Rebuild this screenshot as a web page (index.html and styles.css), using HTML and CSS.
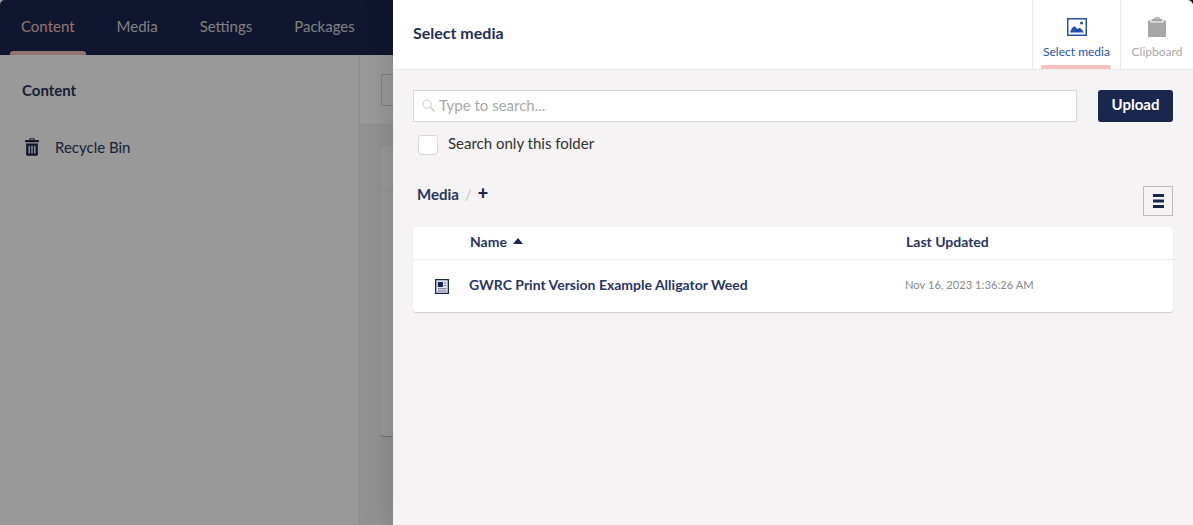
FILE: index.html
```html
<!DOCTYPE html>
<html lang="en">
<head>
<meta charset="utf-8">
<title>Select media</title>
<link rel="stylesheet" href="styles.css">
</head>
<body>
<div class="app">
  <header class="topbar">
    <nav class="sections">
      <a class="section active">Content</a>
      <a class="section">Media</a>
      <a class="section">Settings</a>
      <a class="section">Packages</a>
    </nav>
  </header>
  <div class="main">
    <aside class="tree">
      <h2 class="tree-title">Content</h2>
      <div class="tree-item">
        <svg class="trash" viewBox="0 0 16 20"><path fill="currentColor" d="M5.500 0h5l.7 2H15a1 1 0 0 1 1 1v1.500H0V3a1 1 0 0 1 1-1h3.800zM6.300 1.200 6 2h4l-.3-.8zM1.300 6h13.400v12.500a1.500 1.500 0 0 1-1.500 1.500H2.800a1.500 1.500 0 0 1-1.500-1.500zM4 8.500V17.500h1.600V8.500zM7.200 8.500V17.500h1.600V8.500zM10.400 8.500V17.500H12V8.500z" fill-rule="evenodd"/></svg>
        <span>Recycle Bin</span>
      </div>
    </aside>
    <section class="editor">
      <div class="editor-head"><div class="editor-input"></div></div>
      <div class="editor-body"><div class="editor-card"><div class="editor-card-head"></div></div></div>
    </section>
  </div>
</div>
<div class="overlay"></div>
<div class="modal">
  <header class="modal-head">
    <h1 class="modal-title">Select media</h1>
    <div class="tabs">
      <div class="tab tab-on">
        <svg class="tab-icon" viewBox="0 0 20 18"><path fill="currentColor" fill-rule="evenodd" d="M0 0h20v18H0zM1.500 1.500v15h17v-15z"/><circle fill="currentColor" cx="14.500" cy="5" r="1.500"/><path fill="currentColor" d="M3 14.500c1-2.500 2.500-6 4.500-6 1.200 0 1.800 1.500 2.800 2.700.7-.8 1.400-1.200 2.200-1.200 1.800 0 3 2.500 4.500 4.500z"/></svg>
        <span>Select media</span>
      </div>
      <div class="tab tab-off">
        <svg class="tab-icon clip" viewBox="0 0 18 20"><path fill="currentColor" fill-rule="evenodd" d="M6 2C6 .8 7.300 0 9 0s3 .8 3 2h2.500v2.500h-11V2zM8 2h2c0-.4-.4-.8-1-.8S8 1.600 8 2zM0 3.500h2.500v2h13v-2H18V20H0z"/></svg>
        <span>Clipboard</span>
      </div>
    </div>
  </header>
  <div class="modal-body">
    <div class="search-row">
      <label class="search">
        <svg class="search-icon" viewBox="0 0 14 14"><circle cx="5.500" cy="5.500" r="4.500" fill="none" stroke="currentColor"/><path d="M9 9l4.500 4.500" stroke="currentColor" stroke-width="1.500"/></svg>
        <span>Type to search...</span>
      </label>
      <button class="upload">Upload</button>
    </div>
    <div class="check-row"><span class="checkbox"></span><span class="check-label">Search only this folder</span></div>
    <div class="crumb-row">
      <div class="crumbs"><span class="crumb">Media</span><span class="slash">/</span><span class="plus">+</span></div>
      <button class="view-btn"><svg viewBox="0 0 11 14" class="view-icon"><path fill="currentColor" d="M0 0h11v3H0zM0 5.500h11v3H0zM0 11h11v3H0z"/></svg></button>
    </div>
    <div class="table">
      <div class="thead">
        <div class="c-name">Name <svg class="sort" viewBox="0 0 10 6"><path fill="currentColor" d="M5 0l5 6H0z"/></svg></div>
        <div class="c-date">Last Updated</div>
      </div>
      <div class="trow">
        <svg class="row-icon" viewBox="0 0 14 15"><path fill="#e4e6ee" d="M0 0h14v15H0z"/><path fill="currentColor" fill-rule="evenodd" d="M0 0h14v15H0zM1.300 1.300v12.400h11.400V1.300z"/><path fill="currentColor" d="M2.800 3h5.200v5H2.800z"/><path fill="#6c7391" d="M9 3.500h2.300v1H9zM9 6h2.300v1H9zM2.800 9.300h8.500v1H2.800zM2.800 11.500h8.500v1H2.800z"/></svg>
        <div class="row-name">GWRC Print Version Example Alligator Weed</div>
        <div class="row-date">Nov 16, 2023 1:36:26 AM</div>
      </div>
    </div>
  </div>
</div>
</body>
</html>
```
FILE: styles.css
```css
* { box-sizing: border-box; }
html, body { height: 100%; margin: 0; }
body {
  font-family: Lato, "Open Sans", sans-serif;
  color: #1b264f;
  background: #fff;
  overflow: hidden;
  position: relative;
}
.app { height: 100%; display: flex; flex-direction: column; }
.topbar { height: 55px; background: #1b264f; flex: none; border-top-left-radius: 5px; }
.sections { display: flex; height: 100%; padding-left: 10px; }
.section {
  position: relative;
  padding: 0 11px 3px;
  margin-right: 20px;
  display: flex;
  align-items: center;
  font-size: 15px;
  color: #d8d7d9;
}
.section.active { color: #f5c1bc; }
.section.active::after {
  content: "";
  position: absolute;
  left: 0; right: 0; bottom: 0;
  height: 4px;
  background: #f5c1bc;
  border-radius: 3px 3px 0 0;
}
.main { flex: 1; display: flex; min-height: 0; }
.tree { width: 360px; flex: none; background: #fff; border-right: 1px solid #e9e9eb; padding: 26px 22px; color: #2a3560; }
.tree-title { margin: 0 0 39px; font-size: 15px; line-height: 18px; font-weight: 700; }
.tree-item { display: flex; align-items: center; gap: 16px; font-size: 15px; padding-left: 3px; }
.trash { width: 14px; height: 18px; flex: none; color: #1b264f; }
.editor { flex: 1; background: #f3f3f5; display: flex; flex-direction: column; }
.editor-head { height: 70px; background: #fff; border-bottom: 1px solid #e9e9eb; padding: 19px 21px; }
.editor-input { width: 60px; height: 32px; border: 1px solid #d8d7d9; }
.editor-body { padding: 21px; }
.editor-card { height: 290px; background: #fff; border-radius: 3px; box-shadow: 0 1px 1px rgba(0,0,0,.25); }
.editor-card-head { height: 45px; border-bottom: 1px solid #f0f0f0; }
.overlay { position: absolute; inset: 0; background: rgba(0,0,0,.4); }
.modal {
  position: absolute;
  top: 0; right: 0; bottom: 0;
  width: 800px;
  background: #f5f3f4;
  display: flex;
  flex-direction: column;
  border-top-right-radius: 6px;
  box-shadow: 0 0 30px rgba(0,0,0,.18);
}
.modal-head {
  height: 70px;
  flex: none;
  background: #fff;
  border-bottom: 1px solid #e9e9eb;
  border-top-right-radius: 6px;
  display: flex;
  justify-content: space-between;
  align-items: stretch;
  padding-left: 20px;
}
.modal-title { margin: 0; font-size: 16px; font-weight: 700; line-height: 66px; color: #232d57; }
.tabs { display: flex; }
.tab {
  position: relative;
  width: 88px;
  border-left: 1px solid #e9e9eb;
  display: flex;
  flex-direction: column;
  align-items: center;
  padding-top: 18px;
  font-size: 12px;
  line-height: 15px;
}
.tab-off { width: 73px; color: #a7a7a9; }
.tab-on { color: #2152a3; }
.tab-on::after {
  content: "";
  position: absolute;
  left: 8px; right: 9px; bottom: 0;
  height: 4px;
  background: #f5c1bc;
  border-radius: 3px 3px 0 0;
}
.tab-icon { width: 20px; height: 18px; margin-bottom: 8px; }
.clip { height: 20px; width: 18px; margin-top: -1px; margin-bottom: 7px; }
.modal-body { flex: 1; padding: 20px; display: flex; flex-direction: column; }
.search-row { display: flex; justify-content: space-between; align-items: flex-start; }
.search {
  width: 664px;
  height: 32px;
  background: #fff;
  border: 1px solid #d8d7d9;
  display: flex;
  align-items: center;
  padding: 0 0 2px 8px;
  gap: 4px;
  font-size: 15px;
  color: #a7a7a9;
}
.search-icon { width: 13px; height: 13px; color: #c6c6c8; }
.upload {
  width: 75px;
  height: 32px;
  border: 0;
  border-radius: 3px;
  background: #1b264f;
  color: #fff;
  font: 700 15px Lato, sans-serif;
  padding: 0 0 5px;
}
.check-row { display: flex; align-items: center; gap: 10px; margin: 13px 0 0 5px; font-size: 15px; line-height: 20px; color: #303033; }
.check-label { margin-top: -4px; }
.checkbox { width: 20px; height: 20px; background: #fff; border: 1px solid #d8d7d9; border-radius: 3px; }
.crumb-row { display: flex; justify-content: space-between; align-items: flex-start; margin-top: 28px; padding-left: 4px; }
.crumbs { display: flex; align-items: center; font-size: 15px; line-height: 22px; font-weight: 700; height: 22px; color: #2a3560; }
.crumb { color: #2a3560; }
.slash { color: #c6c6c8; font-weight: 400; margin: 0 6px; }
.plus { color: #1b264f; font-weight: 900; font-size: 18px; line-height: 18px; margin-top: -3px; }
.view-btn {
  width: 30px;
  height: 30px;
  margin-top: 3px;
  background: none;
  border: 1px solid #bbb;
  padding: 0;
  display: flex;
  align-items: center;
  justify-content: center;
}
.view-icon { width: 11px; height: 14px; color: #1b264f; }
.table {
  margin-top: 11px;
  background: #fff;
  border-radius: 3px;
  box-shadow: 0 1px 1px rgba(0,0,0,.16);
  color: #2a3560;
}
.thead { height: 33px; display: flex; align-items: center; border-bottom: 1px solid #e9e9eb; padding-bottom: 4px; font-size: 14px; font-weight: 700; }
.c-name { width: 493px; padding-left: 57px; display: flex; align-items: center; gap: 6px; }
.sort { width: 10px; height: 6px; color: #1b264f; }
.trow { height: 52px; display: flex; align-items: center; }
.row-icon { width: 14px; height: 15px; margin-left: 22px; flex: none; color: #1b264f; }
.row-name { width: 436px; margin-left: 20px; padding-bottom: 4px; font-size: 14px; font-weight: 700; }
.row-date { padding-bottom: 4px; font-size: 11.2px; color: #88878b; }
```
